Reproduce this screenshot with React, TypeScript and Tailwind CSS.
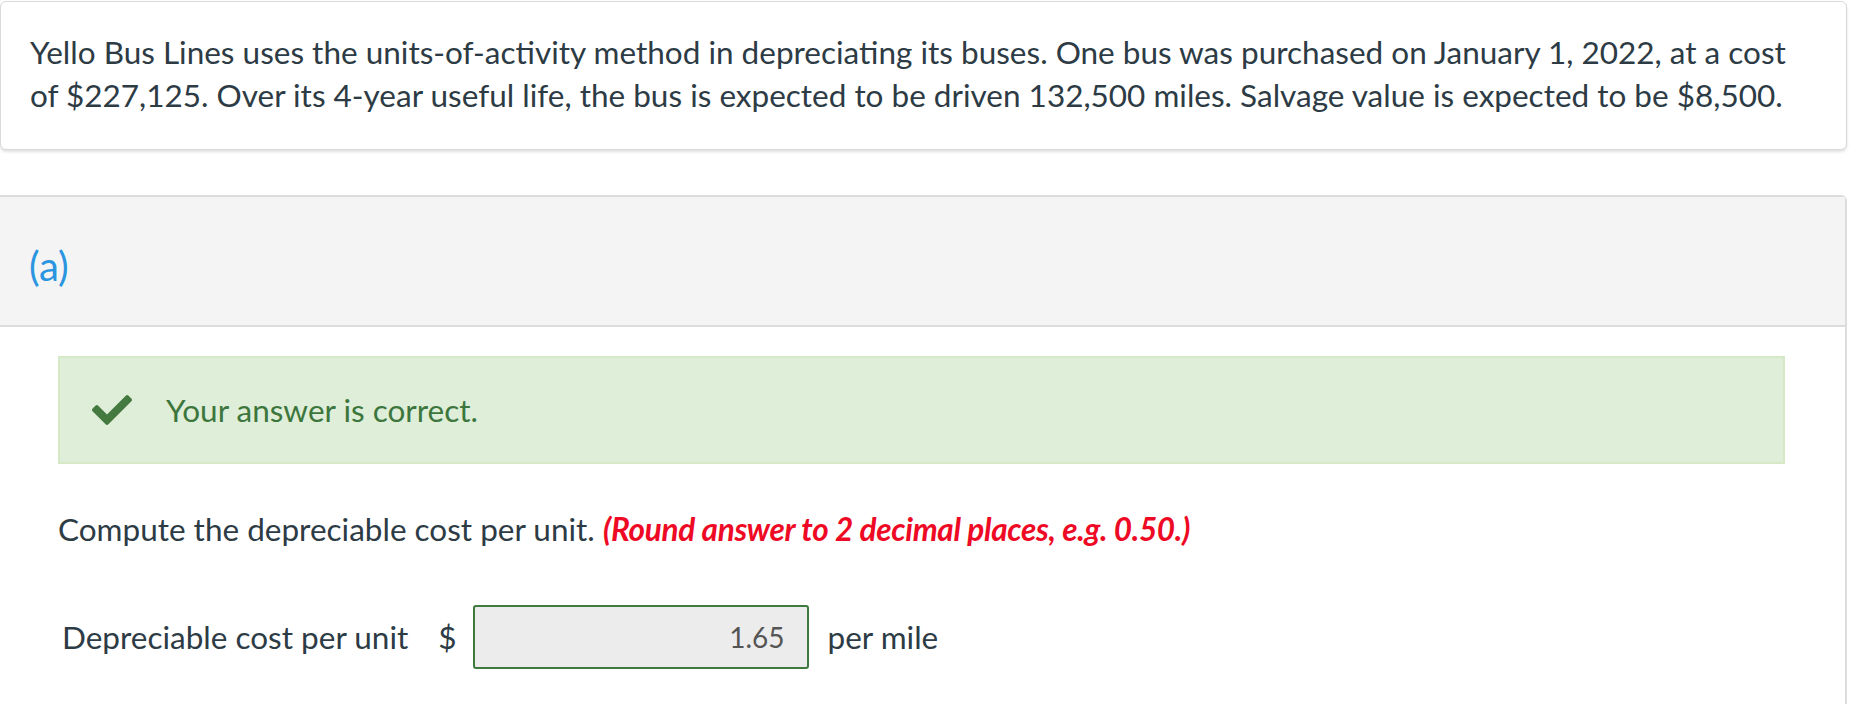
import { FaCheck } from 'react-icons/fa'

export default function App() {
  return (
    <div className="min-h-screen bg-white font-['Lato','Liberation_Sans',sans-serif] text-[#2d3b45] overflow-hidden">
      <div className="pt-px">
        <div className="rounded-md border border-[#d9d9d9] bg-white shadow-[0_2px_3px_rgba(0,0,0,0.12)] w-[1847px] pl-[29px] pr-[40px] pt-[29px] pb-[32px]">
          <p className="text-[31.5px] leading-[43px]">
            Yello Bus Lines uses the units-of-activity method in depreciating its buses. One bus was purchased on January 1, 2022, at a cost of $227,125. Over its 4-year useful life, the bus is expected to be driven 132,500 miles. Salvage value is expected to be $8,500.
          </p>
        </div>
      </div>

      <div className="mt-[45px] w-[1847px] rounded-tr-md border-t-2 border-r-2 border-[#dcdcdc] min-h-[520px]">
        <div className="h-[130px] bg-[#f4f4f4] border-b-2 border-[#dcdcdc] flex items-center pl-[29px]">
          <span className="text-[40px] leading-none text-[#2b95df] pt-[10px]">(a)</span>
        </div>

        <div className="pl-[58px] pr-[60px] pt-[29px]">
          <div className="h-[108px] border-2 border-[#d6e9c6] bg-[#dfeed8] flex items-center pl-[32px] text-[#3c763d]">
            <FaCheck className="w-[40px] h-[40px] text-[#44793f]" />
            <span className="ml-[34px] text-[31.5px] leading-[43px]">Your answer is correct.</span>
          </div>

          <p className="mt-[44px] text-[31.5px] leading-[43px]">
            Compute the depreciable cost per unit.{' '}
            <span className="italic font-bold tracking-[-0.3px] text-[#ee0a24]">(Round answer to 2 decimal places, e.g. 0.50.)</span>
          </p>

          <div className="mt-[54px] flex items-center text-[31.5px] leading-[43px]">
            <span className="ml-[4px]">Depreciable cost per unit</span>
            <span className="ml-[30px]">$</span>
            <div className="ml-[16px] w-[336px] h-[64px] rounded-[3px] border-2 border-[#3e7a3e] bg-[#ececec] flex items-center justify-end pr-[22px] text-[28px] text-[#555]">
              1.65
            </div>
            <span className="ml-[19px]">per mile</span>
          </div>
        </div>
      </div>
    </div>
  )
}
